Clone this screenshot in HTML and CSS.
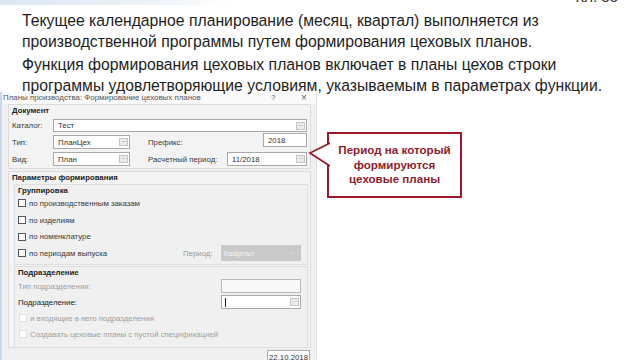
FILE: index.html
```html
<!DOCTYPE html>
<html lang="ru">
<head>
<meta charset="utf-8">
<link rel="stylesheet" href="styles.css">
</head>
<body>
<div class="topdeco"></div>
<div class="page-no">Кл. 35</div>
<div class="intro">
  <p>Текущее календарное планирование (месяц, квартал) выполняется из<br>производственной программы путем формирования цеховых планов.</p>
  <p>Функция формирования цеховых планов включает в планы цехов строки<br>программы удовлетворяющие условиям, указываемым в параметрах функции.</p>
</div>
<div class="stage">
  <div class="dialog">
    <div class="titlebar">
      <span class="title">Планы производства: Формирование цеховых планов</span>
      <span class="help">?</span>
      <span class="close">×</span>
    </div>
    <div class="dbody">
      <section class="group doc">
        <div class="gtitle">Документ</div>
        <div class="docgrid">
          <span class="lbl r1">Каталог:</span>
          <span class="inp r1 wide">Тест<i class="btn">···</i></span>
          <span class="lbl r2">Тип:</span>
          <span class="inp r2 c2">ПланЦех<i class="btn">···</i></span>
          <span class="lbl r2 c4">Префикс:</span>
          <span class="inp r2 c6 prefix">2018</span>
          <span class="lbl r3">Вид:</span>
          <span class="inp r3 c2">План<i class="btn">···</i></span>
          <span class="lbl r3 c4">Расчетный период:</span>
          <span class="inp r3 c56">11/2018<i class="btn">···</i></span>
        </div>
      </section>
      <section class="group params">
        <div class="gtitle">Параметры формирования</div>
        <div class="sub grp">
          <div class="gtitle">Группировка</div>
          <div class="chk"><i class="box"></i>по производственным заказам</div>
          <div class="chk"><i class="box"></i>по изделиям</div>
          <div class="chk"><i class="box"></i>по номенклатуре</div>
          <div class="chk last"><i class="box"></i><span class="grow">по периодам выпуска</span><span class="plabel">Период:</span><span class="combo">Квартал<svg class="chev" viewBox="0 0 8 5" width="7" height="4"><path d="M1 1l3 3 3-3" fill="none" stroke="#e8e8e8" stroke-width="1"/></svg></span></div>
        </div>
        <div class="sub dept">
          <div class="gtitle">Подразделение</div>
          <div class="drow"><span class="dis">Тип подразделения:</span><span class="inp dinp empty"></span></div>
          <div class="drow"><span>Подразделение:</span><span class="inp dinp"><b class="caret"></b><i class="btn">···</i></span></div>
          <div class="chk dis"><i class="box light"></i>и входящие в него подразделения</div>
          <div class="chk dis"><i class="box light"></i>Создавать цеховые планы с пустой спецификацией</div>
        </div>
      </section>
      <div class="daterow"><span>Дата формирования:</span><span class="inp dateinp">22.10.2018</span></div>
    </div>
  </div>
  <div class="callout">
    <svg class="pointer" viewBox="0 0 22 26" width="22" height="26"><path d="M22 1 L2 11 L22 24" fill="#fff" stroke="#a0182c" stroke-width="1.8" stroke-linejoin="miter"/></svg>
    <p>Период на который<br>формируются<br>цеховые планы</p>
  </div>
</div>
</body>
</html>
```

FILE: styles.css
```css
* { box-sizing: border-box; }
html, body { margin: 0; padding: 0; }
body {
  width: 640px;
  height: 360px;
  overflow: hidden;
  background: #fff;
  position: relative;
  font-family: "Liberation Sans", Arial, sans-serif;
}
.topdeco {
  position: absolute;
  left: 0; top: 0;
  width: 230px; height: 5px;
  background: linear-gradient(90deg, #dbe6f2, #eef3f8 70%, rgba(255,255,255,0));
}
.page-no {
  position: absolute;
  right: 22px; top: -12px;
  font-size: 15px;
  color: #333;
}
.intro {
  padding: 10px 0 0 22px;
  height: 92px;
  color: #1e1e1e;
  font-size: 17.4px;
  line-height: 21px;
}
.intro p {
  margin: 0 0 1.5px;
  white-space: nowrap;
  transform: scaleX(0.905);
  transform-origin: 0 0;
}

.stage { display: flex; align-items: flex-start; }

.dialog {
  width: 317px;
  height: 268px;
  background: #f0f0f0;
  border-left: 2px solid #c5d9ee;
  border-right: 1px solid #dedede;
  font-size: 7.8px;
  color: #3a3a3a;
}
.titlebar {
  height: 12px;
  line-height: 12px;
  display: flex;
  align-items: center;
  background: #fafafa;
  padding-left: 1px;
  color: #555;
  font-size: 7.9px;
  white-space: nowrap;
  overflow: hidden;
}
.title { flex: 1; }
.help { width: 30px; }
.close { width: 15px; font-size: 10px; line-height: 12px; color: #666; }

.dbody { padding: 0 5px 0 6px; }
.group {
  border: 1px solid #dcdcdc;
  background: #f3f3f3;
}
.gtitle {
  font-weight: bold;
  color: #222;
  font-size: 7.8px;
  line-height: 10px;
}
.doc { margin-top: 0; height: 65px; padding: 1px 2px 0 3px; }
.docgrid {
  display: grid;
  grid-template-columns: 41px 77px 18px 79px 36px 44px;
  grid-template-rows: 13px 14px 14px;
  row-gap: 3px;
  margin-top: 3px;
  align-items: center;
  white-space: nowrap;
}
.lbl { grid-column: 1; white-space: nowrap; }
.r1 { grid-row: 1; }
.r2 { grid-row: 2; }
.r3 { grid-row: 3; }
.c2 { grid-column: 2; }
.c4 { grid-column: 4; }
.c6 { grid-column: 6; }
.c56 { grid-column: 5 / 7; }
.wide { grid-column: 2 / 7; }
.inp {
  display: flex;
  align-items: center;
  justify-content: space-between;
  height: 100%;
  background: #fff;
  border: 1px solid #a9a9a9;
  padding: 0 1px 0 4px;
  color: #333;
}
.prefix { margin-top: -4px; height: 14px; }
.btn {
  font-style: normal;
  width: 9px; height: 8px;
  border: 1px solid #c4c4c4;
  background: #ececec;
  font-size: 6px;
  line-height: 5px;
  text-align: center;
  color: #666;
  letter-spacing: -0.5px;
}

.params { margin-top: 2px; padding: 1px 2px 2px 3px; height: 177px; }
.sub {
  border: 1px solid #dedede;
  background: #f0f0f0;
  margin-left: 2px;
  padding: 1px 2px 0 3px;
}
.grp { margin-top: 1px; height: 81px; }
.chk {
  display: flex;
  align-items: center;
  height: 16.7px;
  white-space: nowrap;
}
.grp .gtitle { margin-bottom: -1px; }
.box {
  width: 8px; height: 8px;
  border: 1px solid #555;
  background: #fff;
  margin-right: 3px;
  flex: none;
}
.box.light { border-color: #e0e0e0; }
.grow { flex: 1; }
.plabel { color: #9a9a9a; width: 38px; }
.combo {
  width: 80px; height: 16px;
  background: #c9c9c9;
  color: #f4f4f4;
  display: flex; align-items: center; justify-content: space-between;
  padding: 0 5px 0 3px;
  margin-right: 4px;
  font-size: 8px;
}
.dept { margin-top: 1px; height: 82px; }
.dept .gtitle { margin-bottom: 0; }
.drow {
  display: flex;
  justify-content: space-between;
  align-items: center;
  height: 16px;
  padding-right: 4px;
  color: #222;
}
.dis { color: #a0a0a0; }
.dinp { width: 80px; height: 14px; }
.empty { background: #f8f8f8; border-color: #b8b8b8; }
.caret { width: 1px; height: 9px; background: #222; margin-left: -1px; }
.dept .chk { margin-left: 1px; height: 16px; }

.daterow {
  display: flex;
  justify-content: space-between;
  align-items: flex-end;
  padding: 2px 1px 0 0;
  height: 16px;
}
.daterow span:first-child { padding-left: 5px; margin-bottom: -5px; }
.dateinp { width: 43px; height: 14px; justify-content: center; padding: 0; }

.callout {
  position: relative;
  margin: 40px 0 0 10px;
  width: 135px;
  height: 66px;
  border: 2px solid #a0182c;
  background: #fff;
  display: flex;
  align-items: center;
  justify-content: center;
}
.callout p {
  margin: 0;
  text-align: center;
  font-weight: bold;
  font-size: 11.6px;
  line-height: 14.5px;
  color: #8f1b2c;
}
.pointer {
  position: absolute;
  left: -21px;
  top: 8px;
}
```
